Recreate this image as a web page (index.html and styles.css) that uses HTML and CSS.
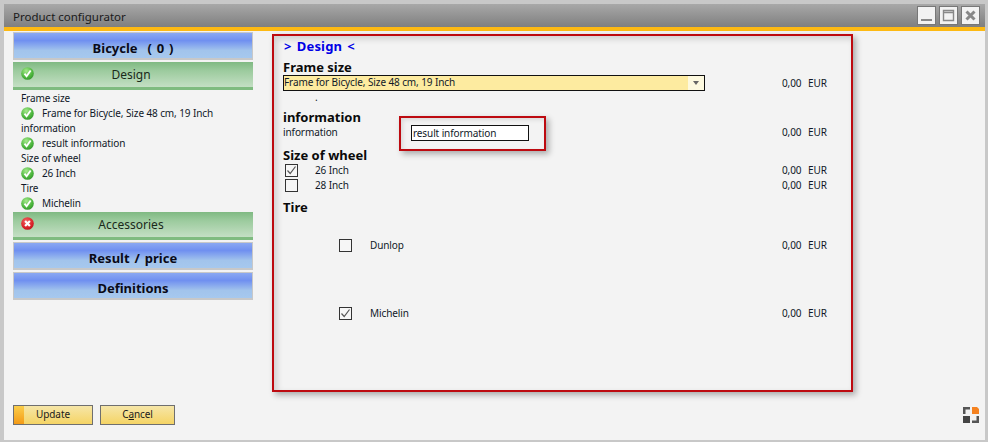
FILE: index.html
```html
<!DOCTYPE html>
<html lang="en">
<head>
<meta charset="utf-8">
<title>Product configurator</title>
<link rel="stylesheet" href="styles.css">
</head>
<body>
<svg class="defs" width="0" height="0" aria-hidden="true">
  <defs>
    <radialGradient id="gg" cx="0.4" cy="0.3" r="0.8"><stop offset="0" stop-color="#a6ea8c"/><stop offset="0.6" stop-color="#4fb83f"/><stop offset="1" stop-color="#2f8f2a"/></radialGradient>
    <radialGradient id="rg" cx="0.4" cy="0.3" r="0.8"><stop offset="0" stop-color="#f06060"/><stop offset="0.7" stop-color="#d81f26"/><stop offset="1" stop-color="#a81218"/></radialGradient>
    <symbol id="ok" viewBox="0 0 14 14"><circle cx="7" cy="7" r="6.800" fill="url(#gg)"/><path d="M3.800 7.200 6 10 10.400 3.800" fill="none" stroke="#fff" stroke-width="2"/></symbol>
    <symbol id="bad" viewBox="0 0 14 14"><circle cx="7" cy="7" r="6.800" fill="url(#rg)"/><path d="M4.400 4.400 9.600 9.600M9.600 4.400 4.400 9.600" fill="none" stroke="#fff" stroke-width="2.400"/></symbol>
    <symbol id="tick" viewBox="0 0 11 11"><path d="M1.500 5.500 4.200 8.500 9.500 1.500" fill="none" stroke="#555" stroke-width="1.200"/></symbol>
  </defs>
</svg>
<div class="window">
  <header class="titlebar">
    <span class="title">Product configurator</span>
    <div class="controls">
      <span class="ctl"><svg width="17" height="17" viewBox="0 0 17 17"><path d="M3 13h11" stroke="#888" stroke-width="2"/></svg></span>
      <span class="ctl"><svg width="17" height="17" viewBox="0 0 17 17"><path d="M3.500 3.500h10v10h-10zM3.500 5.500h10" fill="none" stroke="#888" stroke-width="1.400"/></svg></span>
      <span class="ctl"><svg width="17" height="17" viewBox="0 0 17 17"><path d="M4.500 4.500 12.500 12.500M12.500 4.500 4.500 12.500" stroke="#888" stroke-width="3"/></svg></span>
    </div>
  </header>
  <div class="content">
    <aside class="sidebar">
      <div class="bar-blue">Bicycle&nbsp; ( 0 )</div>
      <div class="bar-green"><svg class="bar-icon"><use href="#ok"/></svg>Design</div>
      <ul class="tree">
        <li>Frame size</li>
        <li class="val"><svg class="ic"><use href="#ok"/></svg>Frame for Bicycle, Size 48 cm, 19 Inch</li>
        <li>information</li>
        <li class="val"><svg class="ic"><use href="#ok"/></svg>result information</li>
        <li>Size of wheel</li>
        <li class="val"><svg class="ic"><use href="#ok"/></svg>26 Inch</li>
        <li>Tire</li>
        <li class="val"><svg class="ic"><use href="#ok"/></svg>Michelin</li>
      </ul>
      <div class="bar-green"><svg class="bar-icon"><use href="#bad"/></svg>Accessories</div>
      <div class="bar-blue">Result / price</div>
      <div class="bar-blue">Definitions</div>
    </aside>
    <main class="panel">
      <h1 class="heading">&gt; Design &lt;</h1>
      <h2 class="group g-frame">Frame size</h2>
      <div class="row r-combo">
        <div class="combo"><span class="combo-text">Frame for Bicycle, Size 48 cm, 19 Inch</span><span class="combo-btn"><i></i></span></div>
        <span class="price">0,00</span><span class="cur">EUR</span>
      </div>
      <div class="dot">.</div>
      <h2 class="group g-info">information</h2>
      <div class="row r-info">
        <span class="info-label">information</span>
        <span class="input-wrap"><span class="input">result information</span></span>
        <span class="price">0,00</span><span class="cur">EUR</span>
      </div>
      <h2 class="group g-wheel">Size of wheel</h2>
      <div class="row r-check"><span class="cb"><svg><use href="#tick"/></svg></span><span class="lbl">26 Inch</span><span class="price">0,00</span><span class="cur">EUR</span></div>
      <div class="row r-check"><span class="cb"></span><span class="lbl">28 Inch</span><span class="price">0,00</span><span class="cur">EUR</span></div>
      <h2 class="group g-tire">Tire</h2>
      <div class="row r-tire r-dunlop"><span class="cb"></span><span class="lbl">Dunlop</span><span class="price">0,00</span><span class="cur">EUR</span></div>
      <div class="row r-tire r-michelin"><span class="cb"><svg><use href="#tick"/></svg></span><span class="lbl">Michelin</span><span class="price">0,00</span><span class="cur">EUR</span></div>
    </main>
  </div>
  <footer class="footer">
    <button class="btn btn-primary" type="button">Update</button>
    <button class="btn btn-cancel" type="button">C<u>a</u>ncel</button>
    <svg class="corner" width="16" height="16" viewBox="0 0 16 16">
      <path d="M0 0h7v2.500H2.500V7H0z" fill="#555"/>
      <path d="M9 0h5l2 2v5H9z" fill="#f58220"/>
      <path d="M0 9h7v7H0z" fill="#444"/>
      <path d="M13.500 9H16v7H9v-2.500h4.500z" fill="#555"/>
    </svg>
  </footer>
</div>
</body>
</html>
```
FILE: styles.css
```css
* { box-sizing: border-box; }
html, body { margin: 0; padding: 0; background: #fff; }
body { width: 989px; height: 443px; overflow: hidden; font: 10px/15px "Noto Sans", sans-serif; letter-spacing: -0.1px; color: #101828; }
.defs { position: absolute; }
.window { width: 988px; height: 442px; border: solid #c8c8c8; border-width: 4px 3px 2px 4px; background: #f3f3f3; display: flex; flex-direction: column; }

.titlebar { height: 27px; flex: none; display: flex; align-items: center; justify-content: space-between; padding: 0 5px 0 9px; border-bottom: 4px solid #fdb913; background: linear-gradient(#a8a8a8, #7f7f7f); }
.title { padding-top: 3px; font: 11.500px/20px "Noto Sans", sans-serif; letter-spacing: 0; color: #1a1a1a; }
.controls { display: flex; gap: 3px; }
.ctl { width: 19px; height: 19px; background: #f2f2f2; border: 1px solid #777; display: flex; align-items: center; justify-content: center; }

.content { flex: 1; display: flex; padding: 1px 0 0 9px; align-items: flex-start; }
.sidebar { width: 240px; flex: none; display: flex; flex-direction: column; gap: 2px; }
.bar-blue { height: 28px; border: solid #c8c8c8; border-width: 1px 1px 2px; background: linear-gradient(#8aa8f2 0, #7090f0 30%, #a2c4ec 70%, #a6c8ee 100%); font: bold 13px/30px "Noto Sans", sans-serif; letter-spacing: 0; word-spacing: 1.500px; color: #0a0a18; text-align: center; }
.bar-green { height: 28px; position: relative; padding-right: 4px; border-bottom: 3px solid #7fbb80; background: linear-gradient(#7fb982 0, #9ccb9e 35%, #c4dfc4 100%); font: 12px/26px "Noto Sans", sans-serif; letter-spacing: 0; color: #1a2a1a; text-align: center; }
.bar-icon { position: absolute; left: 8px; top: 5px; width: 13px; height: 13px; }
.tree { list-style: none; margin: -1px 0 -1px; padding: 0 0 0 8px; }
.tree li { height: 15px; display: flex; align-items: center; white-space: nowrap; }
.ic { width: 13px; height: 13px; margin-right: 8px; flex: none; }

.panel { width: 581px; height: 358px; margin: 2px 0 0 19px; padding: 3px 0 0 9px; border: 2px solid #bd0a10; box-shadow: 3px 3px 6px rgba(0,0,0,.3), inset 3px 3px 6px rgba(0,0,0,.15); position: relative; flex: none; }
.heading { margin: 0 0 0 1px; font: bold 13px/15px "Noto Sans", sans-serif; letter-spacing: 0.2px; word-spacing: 1.500px; color: #0000e6; }
.group { margin: 0; font: bold 13px/15px "Noto Sans", sans-serif; letter-spacing: 0; color: #0a0a0a; }
.g-frame { margin-top: 6px; }
.row { display: flex; align-items: center; white-space: nowrap; }
.r-combo { height: 16px; }
.combo { width: 422px; height: 16px; border: 1px solid #111; background: #fdeba0; display: flex; }
.combo-text { flex: 1; line-height: 13px; }
.combo-btn { width: 16px; background: #fdf9df; display: flex; align-items: center; justify-content: center; }
.combo-btn i { width: 0; height: 0; border: 3.500px solid transparent; border-top: 4px solid #666; border-bottom: 0; }
.price { position: absolute; left: 508px; }
.cur { position: absolute; left: 534px; }
.dot { height: 15px; line-height: 12px; padding-left: 32px; }
.g-info { margin-top: 4px; }
.r-info { height: 15px; }
.info-label { width: 128px; }
.input-wrap { position: relative; }
.input { display: block; width: 118px; height: 16px; border: 1px solid #111; background: #fff; line-height: 14px; padding-left: 1px; }
.input-wrap::before { content: ""; position: absolute; left: -12px; top: -9px; width: 143px; height: 31px; border: 2px solid #bd0a10; box-shadow: 3px 3px 6px rgba(0,0,0,.3), inset 2px 2px 4px rgba(0,0,0,.1); pointer-events: none; }
.g-wheel { margin-top: 8px; }
.r-check { height: 15px; padding-left: 2px; }
.cb { width: 13px; height: 13px; flex: none; border: 1px solid #333; background: #f6f6f6; display: block; }
.cb svg { width: 11px; height: 11px; display: block; }
.r-check .lbl { margin-left: 17px; }
.g-tire { margin-top: 7px; }
.r-tire { padding-left: 56px; }
.r-tire .lbl { margin-left: 18px; }
.r-dunlop { margin-top: 23px; height: 15px; }
.r-michelin { margin-top: 53px; height: 15px; }

.footer { height: 35px; flex: none; display: flex; align-items: flex-start; gap: 7px; padding: 0 6px 0 9px; }
.btn { height: 20px; padding: 0 0 2px; border: 1px solid #6f6f6f; background: linear-gradient(#f6e6a8, #f5d465); font: 10px/15px "Noto Sans", sans-serif; letter-spacing: -0.1px; color: #1a1a1a; }
.btn-primary { width: 80px; position: relative; }
.btn-primary::before { content: ""; position: absolute; left: 0; top: 0; bottom: 0; width: 10px; background: linear-gradient(#fbce4a, #f49a16); }
.btn-cancel { width: 75px; }
.corner { margin: 2px 0 0 auto; }
```
